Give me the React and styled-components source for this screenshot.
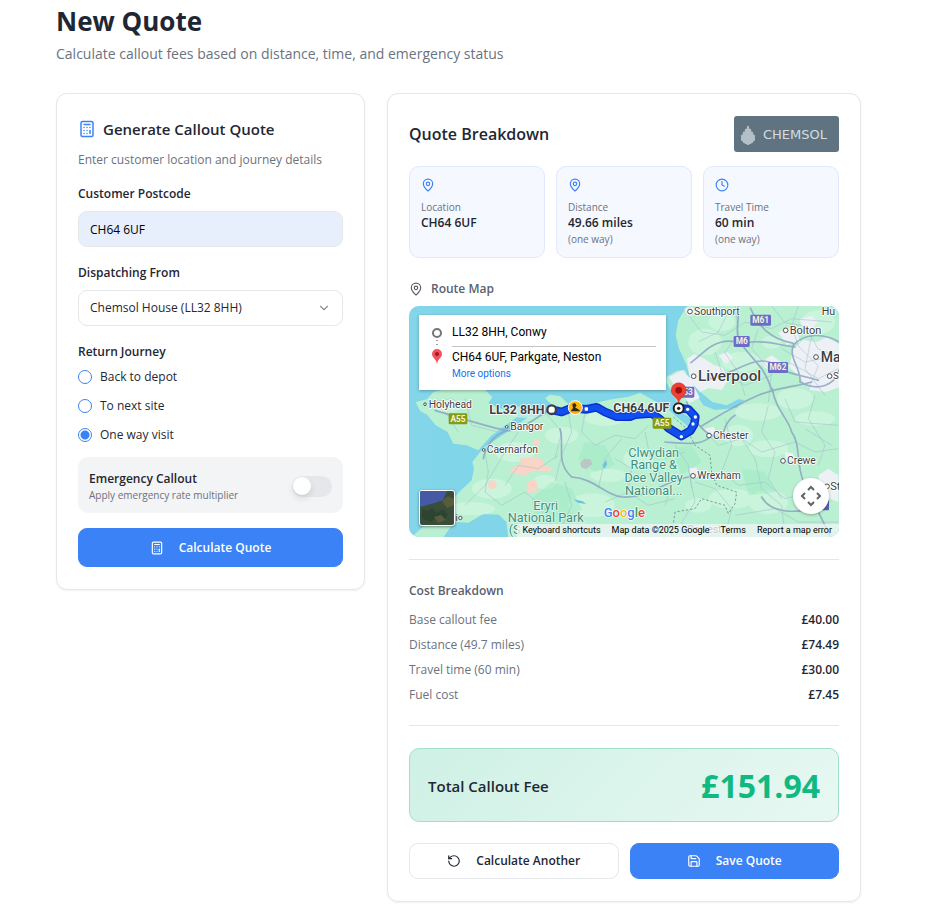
import React, { useState } from 'react';
import styled, { createGlobalStyle, css } from 'styled-components';
import { Calculator, ChevronDown, Clock, MapPin, RotateCcw, Save } from 'lucide-react';

const GlobalStyle = createGlobalStyle`
  * {
    box-sizing: border-box;
  }

  body {
    margin: 0;
    background: #ffffff;
    color: #1f2733;
    font-family: 'Open Sans', 'Noto Sans', sans-serif;
    font-size: 12px;
    line-height: 20px;
  }

  button,
  input,
  select {
    font: inherit;
    color: inherit;
  }
`;

const Page = styled.main`
  padding: 4px 71px 7px 56px;
`;

const PageTitle = styled.h1`
  margin: 0;
  font-size: 26px;
  font-weight: 700;
  line-height: 34px;
`;

const PageSubtitle = styled.p`
  margin: 6px 0 29px;
  color: #6b7280;
  font-size: 14px;
`;

const Columns = styled.div`
  display: grid;
  grid-template-columns: minmax(0, 309fr) minmax(0, 474fr);
  gap: 22px;
  align-items: start;
`;

const Card = styled.section`
  padding: 21px 21px 22px;
  background: #ffffff;
  border: 1px solid #e5e7eb;
  border-radius: 11px;
  box-shadow: 0 1px 2px rgba(0, 0, 0, 0.06);
`;

const FormTitle = styled.h2`
  display: flex;
  align-items: center;
  gap: 7px;
  margin: 0;
  font-size: 15px;
  font-weight: 600;
  line-height: 28px;

  svg {
    color: #3b82f6;
  }
`;

const FormHint = styled.p`
  margin: 7px 0 14px;
  color: #6b7280;
`;

const Field = styled.div`
  display: flex;
  flex-direction: column;
  gap: 7px;
  margin-bottom: 16px;
`;

const FieldLabel = styled.label`
  font-weight: 600;
`;

const controlStyles = css`
  width: 100%;
  height: 36px;
  padding: 0 11px;
  border: 1px solid #e5e7eb;
  border-radius: 9px;
`;

const TextInput = styled.input`
  ${controlStyles}
  background: #e8effc;
  color: #000000;
`;

const SelectWrap = styled.div`
  position: relative;

  svg {
    position: absolute;
    top: 11px;
    right: 12px;
    color: #8b9099;
    pointer-events: none;
  }
`;

const Select = styled.select`
  ${controlStyles}
  appearance: none;
  background: #ffffff;
`;

const RadioGroup = styled.fieldset`
  display: flex;
  flex-direction: column;
  gap: 9px;
  margin: 0 0 12px;
  padding: 0;
  border: 0;

  legend {
    padding: 0;
    margin-bottom: 5px;
    font-weight: 600;
  }
`;

const RadioLabel = styled.label`
  display: flex;
  align-items: center;
  gap: 8px;
`;

const Radio = styled.input`
  appearance: none;
  width: 14px;
  height: 14px;
  margin: 0;
  border: 1px solid #3b82f6;
  border-radius: 50%;

  &:checked {
    background: radial-gradient(circle, #3b82f6 4px, #ffffff 5px);
  }
`;

const EmergencyBox = styled.div`
  display: flex;
  align-items: center;
  justify-content: space-between;
  height: 56px;
  margin-bottom: 15px;
  padding: 2px 11px 0;
  background: #f3f4f6;
  border-radius: 10px;
`;

const EmergencyTitle = styled.label`
  display: block;
  font-weight: 600;
  line-height: 17px;
`;

const SmallText = styled.span`
  display: block;
  color: #6b7280;
  font-size: 10px;
  line-height: 16px;
`;

const Switch = styled.input`
  appearance: none;
  display: flex;
  align-items: center;
  width: 40px;
  height: 21px;
  margin: 0;
  padding: 1px;
  background: ${props => (props.checked ? '#3b82f6' : '#e5e7eb')};
  border-radius: 11px;

  &::before {
    content: '';
    width: 18px;
    height: 18px;
    margin-left: ${props => (props.checked ? '20px' : '0')};
    background: #ffffff;
    border-radius: 50%;
    box-shadow: 0 4px 7px rgba(0, 0, 0, 0.1);
  }
`;

const Button = styled.button`
  display: flex;
  flex: 1 1 0;
  align-items: center;
  justify-content: center;
  gap: 15px;
  height: ${props => props.$height || 36}px;
  padding: 0 14px;
  border: 1px solid ${props => (props.$primary ? '#3b82f6' : '#e5e7eb')};
  border-radius: 9px;
  background: ${props => (props.$primary ? '#3b82f6' : '#ffffff')};
  color: ${props => (props.$primary ? '#ffffff' : '#1f2733')};
  font-weight: 600;
  cursor: pointer;
`;

const FullButton = styled(Button)`
  width: 100%;
`;

const BreakdownHeader = styled.div`
  display: flex;
  align-items: center;
  justify-content: space-between;
  margin-bottom: 14px;
  padding-top: 1px;
`;

const BreakdownTitle = styled.h2`
  margin: 0;
  font-size: 16px;
  font-weight: 600;
`;

const Logo = styled.div`
  display: flex;
  align-items: center;
  gap: 8px;
  width: 105px;
  height: 36px;
  padding: 2px 6px 0 7px;
  background: #5f7480;
  border-radius: 3px;
  color: #d5dce0;
  font-family: 'DejaVu Sans', sans-serif;
  font-size: 13px;

  svg {
    flex-shrink: 0;
  }
`;

const Stats = styled.div`
  display: grid;
  grid-template-columns: repeat(3, minmax(0, 1fr));
  gap: 11px;
  margin-bottom: 21px;
`;

const Stat = styled.div`
  padding: 11px 11px 10px;
  background: #f5f8fe;
  border: 1px solid #dfe9fb;
  border-radius: 10px;

  svg {
    display: block;
    margin-bottom: 7px;
    color: #3b82f6;
  }
`;

const StatValue = styled.strong`
  display: block;
  font-weight: 600;
  line-height: 16px;
`;

const SectionTitle = styled.h3`
  display: flex;
  align-items: center;
  gap: 8px;
  margin: 0;
  color: #59616e;
  font-size: 12px;
  font-weight: 600;
`;

const MapFrame = styled.div`
  position: relative;
  height: 231px;
  margin: 7px 0 22px;
  overflow: hidden;
  border-radius: 10px;
  background: #b9f0d3;
  color: #000000;
  font-family: Roboto, sans-serif;
`;

const MapDrawing = styled.svg`
  display: block;
  width: 100%;
  height: 100%;
`;

const RoutePanel = styled.div`
  position: absolute;
  top: 9px;
  left: 10px;
  display: flex;
  gap: 9px;
  width: 247px;
  height: 75px;
  padding: 7px 10px 0 12px;
  background: #ffffff;
  box-shadow: 0 1px 3px rgba(0, 0, 0, 0.3);
`;

const RouteStops = styled.div`
  flex: 1;
`;

const RouteStop = styled.div`
  height: ${props => (props.$first ? 25 : 21)}px;
  border-bottom: ${props => (props.$first ? '1px solid #c4c4c4' : '0')};
`;

const MoreOptions = styled.a`
  display: block;
  color: #1a73e8;
  font-size: 10px;
  line-height: 12px;
  text-decoration: none;
`;

const Thumbnail = styled.button`
  position: absolute;
  left: 10px;
  bottom: 11px;
  width: 36px;
  height: 36px;
  padding: 0;
  overflow: hidden;
  border: 1px solid #ffffff;
  border-radius: 3px;
  box-shadow: 0 1px 3px rgba(0, 0, 0, 0.4);

  svg {
    display: block;
  }
`;

const CameraButton = styled.button`
  position: absolute;
  right: 10px;
  bottom: 23px;
  width: 36px;
  height: 36px;
  padding: 0;
  border: 0;
  border-radius: 50%;
  background: #ffffff;
  box-shadow: 0 1px 3px rgba(0, 0, 0, 0.3);
`;

const Attribution = styled.div`
  position: absolute;
  right: 0;
  bottom: 0;
  display: flex;
  gap: 11px;
  height: 13px;
  padding: 0 7px 0 5px;
  background: rgba(240, 245, 245, 0.75);
  font-size: 9px;
  line-height: 13px;

  a {
    color: #000000;
    text-decoration: none;
  }
`;

const Divider = styled.hr`
  height: 1px;
  margin: 0;
  border: 0;
  background: #e5e7eb;
`;

const CostTable = styled.table`
  width: 100%;
  margin: 21px 0 18px;
  border-collapse: collapse;

  caption {
    padding-bottom: 6px;
    color: #59616e;
    font-weight: 600;
    text-align: left;
  }

  th,
  td {
    height: 25px;
    padding: 0;
    line-height: 18px;
  }

  th {
    color: #6b7280;
    font-weight: 400;
    text-align: left;
  }

  td {
    font-weight: 600;
    text-align: right;
  }
`;

const Total = styled.div`
  display: flex;
  align-items: center;
  justify-content: space-between;
  height: 74px;
  margin: 22px 0 21px;
  padding: 2px 18px 0;
  border: 1px solid #a0dfc9;
  border-radius: 10px;
  background: linear-gradient(135deg, #cff1e5, #e7f8f2);
`;

const TotalLabel = styled.span`
  font-size: 15px;
  font-weight: 600;
`;

const TotalValue = styled.strong`
  color: #10b981;
  font-size: 32px;
  font-weight: 700;
`;

const Actions = styled.div`
  display: flex;
  gap: 11px;
`;

const towns = [
  { name: 'Holyhead', x: 71, y: 317, size: 31, dot: 60 },
  { name: 'Bangor', x: 316, y: 385, size: 31, dot: 305 },
  { name: 'Caernarfon', x: 245, y: 454, size: 31, dot: 236 },
  { name: 'Southport', x: 867, y: 39, size: 31, dot: 855 },
  { name: 'Bolton', x: 1154, y: 96, size: 33, dot: 1142 },
  { name: 'Liverpool', x: 879, y: 238, size: 46, dot: 866 },
  { name: 'Chester', x: 924, y: 411, size: 31, dot: 912 },
  { name: 'Wrexham', x: 877, y: 532, size: 31, dot: 864 },
  { name: 'Crewe', x: 1146, y: 487, size: 31, dot: 1134 },
  { name: 'Ma', x: 1247, y: 179, size: 42, dot: 1233 },
  { name: 'S', x: 1284, y: 232, size: 29, dot: 1274 },
  { name: 'St', x: 1276, y: 564, size: 33, dot: 1266 },
  { name: 'Hu', x: 1250, y: 39, size: 32 },
  { name: 'Oswestry', x: 846, y: 692, size: 31 },
];

const parkLabels = [
  { text: 'Clwydian', x: 746, y: 464 },
  { text: 'Range &', x: 746, y: 502 },
  { text: 'Dee Valley', x: 746, y: 540 },
  { text: 'National...', x: 746, y: 578 },
  { text: 'Eryri', x: 422, y: 624 },
  { text: 'National Park', x: 422, y: 661 },
  { text: '(S', x: 329, y: 697 },
];

const shields = [
  { text: 'M61', x: 1036, y: 38, w: 62, color: '#6d6cc8' },
  { text: 'M6', x: 986, y: 102, w: 48, color: '#6d6cc8' },
  { text: 'M62', x: 1089, y: 180, w: 60, color: '#6d6cc8' },
  { text: '53', x: 812, y: 254, w: 56, color: '#6d6cc8' },
  { text: 'A55', x: 131, y: 334, w: 56, color: '#849b13' },
  { text: 'A55', x: 743, y: 347, w: 56, color: '#849b13' },
];

const paleFields = [
  [130, 310, 45, 20], [260, 560, 60, 30], [200, 620, 70, 20], [330, 450, 60, 30],
  [560, 610, 70, 36], [420, 540, 35, 22], [610, 520, 55, 20], [600, 350, 60, 22],
  [700, 470, 45, 30], [900, 120, 50, 40], [950, 60, 40, 26], [1010, 180, 60, 30],
  [1060, 330, 70, 26], [1170, 290, 55, 32], [1230, 350, 60, 22], [1000, 400, 45, 32],
  [1090, 440, 60, 26], [980, 590, 70, 30], [1090, 600, 60, 36], [880, 610, 40, 22],
  [1240, 60, 50, 36], [1100, 120, 30, 20], [360, 330, 50, 18], [470, 400, 50, 26],
];

const urbanAreas = [
  'M846 170 l22-14 30 14 30 20 24 6 18 38-20 30-40-6-24 12-30-30z',
  'M1165 140 l30-26 40 6 30-14 37 20v130l-40 14-46-6-34-40-30-30z',
  'M1185 50 l34-8 20 18-20 22-30-6z',
  'M1120 92 l26-16 30 14 10 30-40 8z',
  'M792 225 l40-20 22 22 30 60-30 16-40-40z',
  'M1240 520 l30-20 30 20v80l-50-20z',
  'M1070 180 l30-20 34 24-20 20-34-6z',
  'M896 380 l30-6 10 22-24 12z',
  'M850 500 l24-4 10 24-24 12z',
  'M1140 450 l24 4 6 18-28 6z',
  'M940 160 l28-10 16 18-22 18z',
  'M838 20 l24-6 12 20-24 10z',
];

const minorRoads = [
  'M850 40l40 50 70 10 60-40 80 20 60-30 120 10',
  'M880 120l60-30 30-60M930 150l20 60 70 40 80-30',
  'M990 12l10 80-40 60 40 60 20 70M1060 80l-20 60 60 70-10 90',
  'M1100 12l40 50 60 10 40 70 60 20M1180 12l-20 60 20 60 60 60-30 70',
  'M1130 140l70 40 100-20M1150 180l90 50 60-30M1220 100l-20 100 60 80',
  'M880 370l60 60 70-20 60 40 100-30 60 30 70-10',
  'M960 350l20 80-30 80 50 40 80-10 60 50 80-20',
  'M1010 410l40 60 20 90 60 50 10 90M1090 310l-20 80 40 60-20 80 40 60',
  'M1140 290l30 70 130 10M1200 380l80 50M1230 280l-20 70 50 80-20 60',
  'M870 540l60 20 50 60-20 80M850 500l20 100-40 60 20 50M990 640l120-20 70 40 120 0',
  'M490 330l10 60-30 70-20 80M540 330l-10 60 40 40 60-30 60 10 40-40',
  'M580 560l20-90 50-60M600 600l70-30 60 40 80-20M630 470l50 30-10 60',
  'M240 450l10 60-10 60 50 40 70-40 60 50 20 60M300 550l40-60 60 10 60-40',
  'M340 390l-40 60-60 100-60 60M450 470l20-80-50-60M480 540l20 70-40 90',
  'M720 390l20 100 60 60-20 60M810 430l40 60 10 70M780 470l60-20',
  'M80 300l60-10 60 30M180 290l20 80 80 20M120 330l40 60',
];

const majorRoads = [
  'M858 182 C900 150 910 130 950 120 C990 110 1000 130 1040 120 C1090 115 1120 130 1170 135',
  'M1000 12 C1005 70 980 90 1020 140 C1060 190 1080 200 1102 270',
  'M1036 18 C1060 70 1090 110 1165 124',
  'M905 232 C990 220 1050 150 1110 188 C1140 215 1190 220 1240 235',
  'M890 372 C960 330 990 310 1060 280 C1120 255 1170 255 1220 240',
  'M845 300 C860 340 880 380 920 400 C970 430 940 370 990 340',
  'M1102 260 C1110 320 1150 350 1160 390 C1190 430 1170 500 1205 560 L1275 700',
  'M1165 130 C1150 170 1190 200 1185 240 C1240 270 1290 250 1302 205',
  'M1165 130 C1200 90 1260 95 1302 120',
  'M500 525 C570 530 600 580 650 585 C730 590 770 540 850 525',
  'M500 525 C450 480 480 430 465 380',
  'M90 325 C140 340 230 370 305 386 C340 390 390 350 430 325',
  'M305 386 C260 400 240 440 235 470',
  'M1070 585 C1100 640 1180 630 1235 620',
  'M780 420 C850 425 890 430 915 405',
];

const routePath = 'M440 323 L470 330 L500 318 L545 322 L575 316 L600 330 L635 344 L675 344 L690 338 L740 334 L765 352 L790 378 L829 402 L856 386 L868 366 L871 344 L850 322 L822 318';

const RouteMap = () => (
  <MapDrawing viewBox="12 12 1290 693" preserveAspectRatio="xMidYMid slice" aria-hidden="true">
    <rect x="-200" y="0" width="1800" height="720" fill="#83d5e9" />
    {/* Mainland, with the Dee and Mersey estuaries cut into the coast */}
    <path
      fill="#b9f0d3"
      d="M846 12 L820 55 L812 100 L822 140 L843 185 L856 230 L880 265 L922 300 L965 310 L1000 292 L1018 294 L995 318 L930 324 L895 310 L862 258 L840 204 L815 206 L786 224 L784 240 L808 285 L835 335 L880 360 L850 374 L815 345 L782 315 L740 292 L705 272 L672 284 L620 292 L570 303 L535 314 L490 306 L466 283 L435 278 L420 288 L440 308 L420 340 L370 345 L310 388 L262 420 L235 438 L202 480 L207 500 L200 535 L160 572 L130 610 L70 660 L20 705 L115 705 L148 660 L190 662 L235 636 L282 638 L304 660 L310 705 L1500 705 L1500 0 Z"
    />
    <path
      fill="#b9f0d3"
      d="M32 300 L66 292 L85 270 L120 262 L238 262 L262 286 L250 304 L282 318 L330 328 L336 345 L296 374 L258 402 L220 445 L185 430 L145 425 L128 390 L92 370 L66 338 L45 326 Z"
    />
    <g fill="#d5f7e5" opacity="0.6">
      {paleFields.map(([cx, cy, rx, ry]) => (
        <ellipse key={`${cx}-${cy}`} cx={cx} cy={cy} rx={rx} ry={ry} />
      ))}
    </g>
    <g fill="#9feac2">
      <path d="M380 590l60-50 60 20 30 60-40 60-100-10z" opacity=".5" />
      <path d="M540 420l60 10 30 60-60 20-50-40z" opacity=".5" />
      <path d="M800 440l60-10 30 50-60 40z" opacity=".5" />
      <path d="M1010 500l70 10 30 60-80 10z" opacity=".5" />
    </g>
    <g fill="#edf1f5">
      {urbanAreas.map(d => <path key={d} d={d} />)}
    </g>
    <g fill="#f9d5c8">
      <path d="M342 470l36-6 34 8 4 18 26 8-6 10-46-2-30 14-30-4-16-10 16-14 20-6z" />
      <circle cx="262" cy="548" r="13" />
      <path d="M368 540l18-8 12 12-2 24-24 6-8-14z" />
      <circle cx="394" cy="420" r="10" />
    </g>
    <path d="M526 482l12-12 18 2 6 14-18 16-16-6z" fill="#bdc7c5" />
    <path d="M592 490l12-16 2 14-8 12zM505 592l28 6 10 8-24-4z" fill="#69c3e2" />
    <g fill="none" stroke="#a3bccb" strokeWidth="2" strokeLinejoin="round" opacity="0.8">
      {minorRoads.map(d => <path key={d} d={d} />)}
    </g>
    <g fill="none" stroke="#8ca5c2" strokeWidth="5" strokeLinecap="round" opacity="0.85">
      {majorRoads.map(d => <path key={d} d={d} />)}
    </g>
    <path
      d="M800 700l10-70 60-10 20-30 70 20 10 25 20-30 5-35-60-20-15-40-5-50-45-30-25-50-40-35"
      fill="none"
      stroke="#7a9c92"
      strokeWidth="3"
      strokeDasharray="7 6"
    />
    <g fill="none" strokeLinejoin="round" strokeLinecap="round">
      <path d={routePath} stroke="#0b32c8" strokeWidth="26" />
      <path d={routePath} stroke="#104ef0" strokeWidth="17" />
    </g>
    {shields.map(shield => (
      <g key={`${shield.text}-${shield.x}`}>
        <rect x={shield.x} y={shield.y} width={shield.w} height="33" rx="4" fill={shield.color} />
        <text
          x={shield.text === '53' ? 849 : shield.x + shield.w / 2}
          y={shield.y + 25}
          fill="#f2f3dd"
          fontSize="25"
          fontWeight="700"
          textAnchor="middle"
        >
          {shield.text}
        </text>
      </g>
    ))}
    <g fill="#ffffff">
      <rect x="539" y="316" width="10" height="10" rx="2" />
      <circle cx="829" cy="404" r="5" />
      <circle cx="864" cy="366" r="5" />
      <circle cx="871" cy="345" r="5" />
      <circle cx="848" cy="322" r="5" />
    </g>
    <g fill="#3c4043" stroke="#ffffff" strokeWidth="5" strokeLinejoin="round" paintOrder="stroke">
      {towns.map(town => (
        <text key={town.name} x={town.x} y={town.y} fontSize={town.size} fontWeight={town.size > 40 ? 500 : 400}>
          {town.name}
        </text>
      ))}
      <text x="253" y="335" fontSize="37" fontWeight="700">LL32 8HH</text>
      <text x="625" y="330" fontSize="37" fontWeight="700">CH64 6UF</text>
    </g>
    <g fill="#ffffff" stroke="#4b5054" strokeWidth="3">
      {towns.filter(town => town.dot).map(town => (
        <circle key={town.name} cx={town.dot} cy={town.y - town.size / 3} r={town.dot < 400 ? 4 : 7} />
      ))}
    </g>
    <g fill="#3d8f7c" stroke="#e2faee" strokeWidth="5" strokeLinejoin="round" paintOrder="stroke" fontSize="38" textAnchor="middle">
      {parkLabels.map(label => (
        <text key={label.text} x={label.x} y={label.y}>{label.text}</text>
      ))}
    </g>
    <circle cx="440" cy="323" r="13" fill="#ffffff" stroke="#3c4043" strokeWidth="7" />
    <circle cx="511" cy="317" r="21" fill="#fbb612" stroke="#ffffff" strokeWidth="3" />
    <path d="M502 306l8-3 5 8-5 5 14 9v3h-27l7-10z" fill="#33291a" />
    <circle cx="821" cy="319" r="15" fill="#ffffff" stroke="#222222" strokeWidth="6" />
    <circle cx="821" cy="319" r="5" fill="#222222" />
    <path d="M821 304 C817 284 798 282 798 265 a23 23 0 0 1 46 0 C844 282 825 284 821 304z" fill="#ea4335" stroke="#c5221f" strokeWidth="1" />
    <circle cx="821" cy="265" r="10" fill="#a50e0e" />
    <text x="596" y="645" fontSize="39" fontWeight="500" stroke="#ffffff" strokeWidth="4" paintOrder="stroke">
      <tspan fill="#4285f4">G</tspan>
      <tspan fill="#ea4335">o</tspan>
      <tspan fill="#fbbc04">o</tspan>
      <tspan fill="#4285f4">g</tspan>
      <tspan fill="#34a853">l</tspan>
      <tspan fill="#ea4335">e</tspan>
    </text>
    <rect x="1250" y="595" width="22" height="30" rx="3" fill="#5b5fb8" />
    <circle cx="166" cy="648" r="5" fill="#ffffff" stroke="#4b5054" strokeWidth="3" />
    <text x="151" y="656" fontSize="29" fill="#3c4043">i</text>
  </MapDrawing>
);

const stats = [
  { icon: MapPin, label: 'Location', value: 'CH64 6UF' },
  { icon: MapPin, label: 'Distance', value: '49.66 miles', note: '(one way)' },
  { icon: Clock, label: 'Travel Time', value: '60 min', note: '(one way)' },
];

const costs = [
  { label: 'Base callout fee', amount: '£40.00' },
  { label: 'Distance (49.7 miles)', amount: '£74.49' },
  { label: 'Travel time (60 min)', amount: '£30.00' },
  { label: 'Fuel cost', amount: '£7.45' },
];

const journeys = ['Back to depot', 'To next site', 'One way visit'];

const QuoteForm = () => {
  const [postcode, setPostcode] = useState('CH64 6UF');
  const [journey, setJourney] = useState('One way visit');
  const [emergency, setEmergency] = useState(false);

  return (
    <Card>
      <FormTitle>
        <Calculator size={18} />
        Generate Callout Quote
      </FormTitle>
      <FormHint>Enter customer location and journey details</FormHint>

      <Field>
        <FieldLabel htmlFor="postcode">Customer Postcode</FieldLabel>
        <TextInput id="postcode" value={postcode} onChange={e => setPostcode(e.target.value)} />
      </Field>

      <Field>
        <FieldLabel htmlFor="depot">Dispatching From</FieldLabel>
        <SelectWrap>
          <Select id="depot" defaultValue="chemsol">
            <option value="chemsol">Chemsol House (LL32 8HH)</option>
          </Select>
          <ChevronDown size={14} />
        </SelectWrap>
      </Field>

      <RadioGroup>
        <legend>Return Journey</legend>
        {journeys.map(name => (
          <RadioLabel key={name}>
            <Radio
              type="radio"
              name="journey"
              checked={journey === name}
              onChange={() => setJourney(name)}
            />
            {name}
          </RadioLabel>
        ))}
      </RadioGroup>

      <EmergencyBox>
        <div>
          <EmergencyTitle htmlFor="emergency">Emergency Callout</EmergencyTitle>
          <SmallText>Apply emergency rate multiplier</SmallText>
        </div>
        <Switch
          id="emergency"
          type="checkbox"
          role="switch"
          checked={emergency}
          onChange={e => setEmergency(e.target.checked)}
        />
      </EmergencyBox>

      <FullButton type="button" $primary $height={39}>
        <Calculator size={14} />
        Calculate Quote
      </FullButton>
    </Card>
  );
};

const QuoteBreakdown = () => (
  <Card>
    <BreakdownHeader>
      <BreakdownTitle>Quote Breakdown</BreakdownTitle>
      <Logo>
        <svg width="14" height="20" viewBox="0 0 14 20" aria-hidden="true">
          <path d="M7 0C6 4 0 7 0 13c0 3 3 6 7 7 4-1 7-4 7-7C14 7 8 4 7 0z" fill="#8496a0" />
          <path d="M1 10v6M3 7v11M5 4v15M7 1v19M9 4v15M11 7v11M13 10v6" stroke="#e4eaed" strokeWidth="1" />
        </svg>
        CHEMSOL
      </Logo>
    </BreakdownHeader>

    <Stats>
      {stats.map(({ icon: Icon, label, value, note }) => (
        <Stat key={label}>
          <Icon size={14} />
          <SmallText>{label}</SmallText>
          <StatValue>{value}</StatValue>
          {note && <SmallText>{note}</SmallText>}
        </Stat>
      ))}
    </Stats>

    <SectionTitle>
      <MapPin size={14} />
      Route Map
    </SectionTitle>
    <MapFrame>
      <RouteMap />
      <RoutePanel>
        <svg width="12" height="48" viewBox="0 0 12 48" aria-hidden="true">
          <circle cx="6" cy="11" r="4" fill="none" stroke="#757575" strokeWidth="2" />
          <path d="M6 18v1M6 22v1" stroke="#9e9e9e" strokeWidth="2" />
          <path d="M6 43C6 37 1 36 1 32a5 5 0 0 1 10 0C11 36 6 37 6 43z" fill="#f5515a" />
          <circle cx="6" cy="32" r="2" fill="#9c1c22" />
        </svg>
        <RouteStops>
          <RouteStop $first>LL32 8HH, Conwy</RouteStop>
          <RouteStop>CH64 6UF, Parkgate, Neston</RouteStop>
          <MoreOptions href="#options">More options</MoreOptions>
        </RouteStops>
      </RoutePanel>
      <Thumbnail type="button" aria-label="Show satellite imagery">
        <svg width="34" height="34" viewBox="0 0 34 34" aria-hidden="true">
          <rect width="34" height="34" fill="#3a4d38" />
          <path d="M0 0h27l-4 9-8 3-8 2-7 2z" fill="#4659a4" />
          <path d="M2 18l6 2 4-3 5 5 6-4 5 6-4 6-8-3-6 4-8-4z" fill="#2c4430" />
          <path d="M22 10l6-5 6 3v6l-7 3zM14 26l7-2 5 5-8 3z" fill="#565c3c" />
        </svg>
      </Thumbnail>
      <CameraButton type="button" aria-label="Map camera controls">
        <svg width="36" height="36" viewBox="0 0 36 36" fill="none" stroke="#5f6368" strokeWidth="2" aria-hidden="true">
          <path d="M15 12l3-3 3 3M15 24l3 3 3-3M12 15l-3 3 3 3M24 15l3 3-3 3" />
        </svg>
      </CameraButton>
      <Attribution>
        <span>Keyboard shortcuts</span>
        <span>Map data ©2025 Google</span>
        <a href="#terms">Terms</a>
        <a href="#report">Report a map error</a>
      </Attribution>
    </MapFrame>

    <Divider />
    <CostTable>
      <caption>Cost Breakdown</caption>
      <tbody>
        {costs.map(cost => (
          <tr key={cost.label}>
            <th scope="row">{cost.label}</th>
            <td>{cost.amount}</td>
          </tr>
        ))}
      </tbody>
    </CostTable>
    <Divider />

    <Total>
      <TotalLabel>Total Callout Fee</TotalLabel>
      <TotalValue>£151.94</TotalValue>
    </Total>

    <Actions>
      <Button type="button">
        <RotateCcw size={14} />
        Calculate Another
      </Button>
      <Button type="button" $primary>
        <Save size={14} />
        Save Quote
      </Button>
    </Actions>
  </Card>
);

const App = () => (
  <>
    <GlobalStyle />
    <Page>
      <PageTitle>New Quote</PageTitle>
      <PageSubtitle>Calculate callout fees based on distance, time, and emergency status</PageSubtitle>
      <Columns>
        <QuoteForm />
        <QuoteBreakdown />
      </Columns>
    </Page>
  </>
);

export default App;
